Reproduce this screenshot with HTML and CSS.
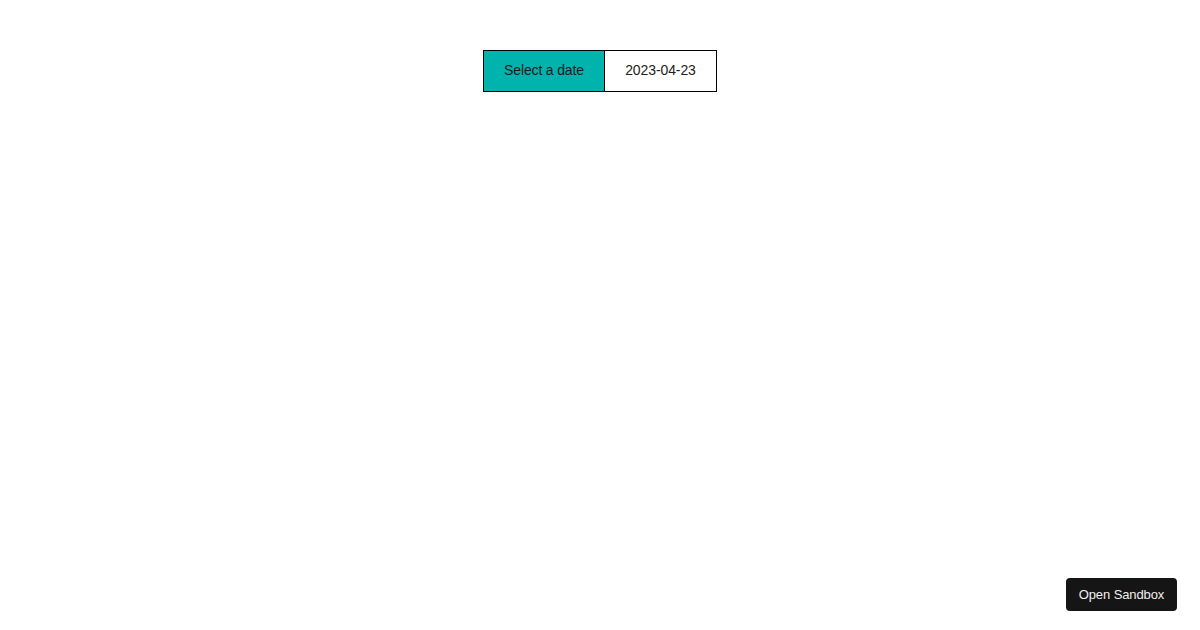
FILE: index.html
```html
<!DOCTYPE html>
<html>
<head>
<meta charset="utf-8">
<link rel="stylesheet" href="styles.css">
</head>
<body>
<div class="wrap">
  <div class="picker">
    <label class="label">Select a date</label>
    <div class="value">2023-04-23</div>
  </div>
</div>
<button class="sandbox">Open Sandbox</button>
</body>
</html>
```
FILE: styles.css
```css
html, body { margin: 0; padding: 0; background: #fff; }
body { font-family: "Liberation Sans", Arial, sans-serif; width: 1200px; height: 630px; overflow: hidden; }
.wrap { display: flex; justify-content: center; padding-top: 50px; }
.picker { display: flex; height: 42px; }
.label { box-sizing: border-box; width: 122px; height: 42px; padding-bottom: 2px; background: #00b3ad; border: 1px solid #000; display: flex; align-items: center; justify-content: center; font-size: 14px; letter-spacing: -0.15px; color: #1a1a1a; }
.value { box-sizing: border-box; width: 112px; height: 42px; padding-bottom: 2px; border: 1px solid #000; border-left: none; display: flex; align-items: center; justify-content: center; font-size: 14px; letter-spacing: -0.1px; color: #222; }
.sandbox { position: fixed; right: 23px; bottom: 19px; width: 111px; height: 33px; padding: 0 0 1px; background: #151515; color: #f0f0f0; border: none; border-radius: 4px; font-family: "Liberation Sans", Arial, sans-serif; font-size: 13px; letter-spacing: -0.1px; }
```
